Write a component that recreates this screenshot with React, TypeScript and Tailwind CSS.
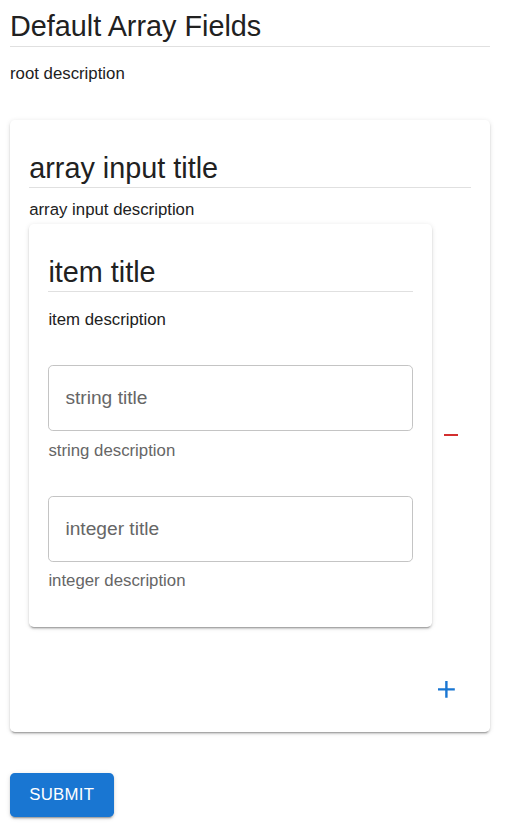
import React from 'react'

const cardShadow =
  'shadow-[0px_3px_1px_-2px_rgba(0,0,0,0.2),0px_2px_2px_0px_rgba(0,0,0,0.14),0px_1px_5px_0px_rgba(0,0,0,0.12)]'

function Divider({ className = '' }: { className?: string }) {
  return <div className={`h-px bg-[#e0e0e0] ${className}`} />
}

function OutlinedField({
  label,
  helper,
  className = '',
  helperGap,
}: {
  label: string
  helper: string
  className?: string
  helperGap: string
}) {
  return (
    <div className={className}>
      <div className="h-[66px] rounded-[4.8px] border border-[#c4c4c4] flex items-center px-[16px]">
        <span className="text-[19.2px] leading-[22px] text-[#666666]">{label}</span>
      </div>
      <div className={`${helperGap} text-[16.8px] leading-[24px] text-[#666666]`}>{helper}</div>
    </div>
  )
}

function RemoveIcon() {
  return (
    <svg viewBox="0 0 24 24" className="w-[24px] h-[24px] fill-[#d32f2f]">
      <path d="M19 13H5v-2h14v2z" />
    </svg>
  )
}

function AddIcon() {
  return (
    <svg viewBox="0 0 24 24" className="w-[28.8px] h-[28.8px] fill-[#1976d2]">
      <path d="M19 13h-6v6h-2v-6H5v-2h6V5h2v6h6v2z" />
    </svg>
  )
}

export default function App() {
  return (
    <div className="w-[526px] min-h-[828px] bg-white font-['Liberation_Sans',Arial,sans-serif] text-[#212121]">
      <div className="ml-[10px] w-[480px] pt-[7px]">
        <h5 className="text-[28.8px] leading-[38px] font-normal">Default Array Fields</h5>
        <Divider className="mt-[1px]" />
        <p className="mt-[15.2px] text-[16.8px] leading-[24px]">root description</p>

        <div className={`mt-[33.8px] rounded-[4.8px] bg-white px-[19.2px] pt-[19.2px] pb-[18.3px] ${cardShadow}`}>
          <h5 className="mt-[10.1px] text-[28.8px] leading-[38px] font-normal">array input title</h5>
          <Divider />
          <p className="mt-[9.9px] text-[16.8px] leading-[24px]">array input description</p>

          <div className="mt-[2.3px] flex items-start">
            <div className={`w-[403px] rounded-[4.8px] bg-white px-[19.2px] pt-[19.2px] pb-[33.5px] ${cardShadow}`}>
              <h5 className="mt-[9px] text-[28.8px] leading-[38px] font-normal">item title</h5>
              <Divider className="mt-[0.3px]" />
              <p className="mt-[16.2px] text-[16.8px] leading-[24px]">item description</p>
              <OutlinedField
                className="mt-[32.8px]"
                helperGap="mt-[7.9px]"
                label="string title"
                helper="string description"
              />
              <OutlinedField
                className="mt-[33.4px]"
                helperGap="mt-[7.2px]"
                label="integer title"
                helper="integer description"
              />
            </div>
            <div className="flex-1 flex justify-end pr-[2px]">
              <button className="mt-[192.2px] p-[6px]">
                <RemoveIcon />
              </button>
            </div>
          </div>

          <div className="mt-[38.4px] flex justify-end">
            <button className="p-[9.6px]">
              <AddIcon />
            </button>
          </div>
        </div>

        <button
          className={`mt-[41.6px] h-[43.4px] px-[19.2px] flex items-center rounded-[4.8px] bg-[#1976d2] text-white text-[16.8px] uppercase tracking-[0.3px] ${cardShadow}`}
        >
          Submit
        </button>
      </div>
    </div>
  )
}
